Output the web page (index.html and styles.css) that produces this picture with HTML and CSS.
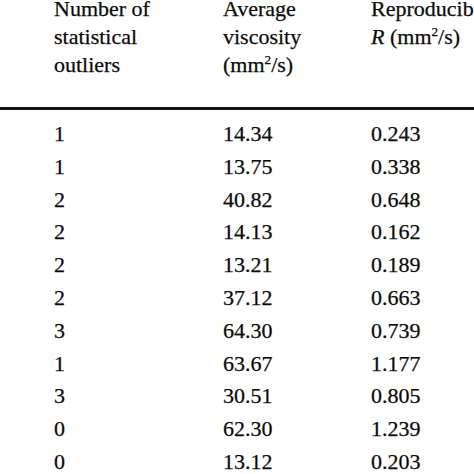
FILE: index.html
```html
<!DOCTYPE html>
<html>
<head>
<meta charset="utf-8">
<link rel="stylesheet" href="styles.css">
</head>
<body>
<div class="table">
  <div class="row head">
    <div class="cell">Number of<br>statistical<br>outliers</div>
    <div class="cell">Average<br>viscosity<br>(mm<sup>2</sup>/s)</div>
    <div class="cell nowrap">Reproducibility<br><i>R</i> (mm<sup>2</sup>/s)</div>
  </div>
  <div class="rule"></div>
  <div class="body">
    <div class="row"><div class="cell">1</div><div class="cell">14.34</div><div class="cell">0.243</div></div>
    <div class="row"><div class="cell">1</div><div class="cell">13.75</div><div class="cell">0.338</div></div>
    <div class="row"><div class="cell">2</div><div class="cell">40.82</div><div class="cell">0.648</div></div>
    <div class="row"><div class="cell">2</div><div class="cell">14.13</div><div class="cell">0.162</div></div>
    <div class="row"><div class="cell">2</div><div class="cell">13.21</div><div class="cell">0.189</div></div>
    <div class="row"><div class="cell">2</div><div class="cell">37.12</div><div class="cell">0.663</div></div>
    <div class="row"><div class="cell">3</div><div class="cell">64.30</div><div class="cell">0.739</div></div>
    <div class="row"><div class="cell">1</div><div class="cell">63.67</div><div class="cell">1.177</div></div>
    <div class="row"><div class="cell">3</div><div class="cell">30.51</div><div class="cell">0.805</div></div>
    <div class="row"><div class="cell">0</div><div class="cell">62.30</div><div class="cell">1.239</div></div>
    <div class="row"><div class="cell">0</div><div class="cell">13.12</div><div class="cell">0.203</div></div>
  </div>
</div>
</body>
</html>
```

FILE: styles.css
```css
html, body {
  margin: 0;
  padding: 0;
  background: #ffffff;
  overflow: hidden;
}
body {
  width: 474px;
  height: 474px;
  font-family: "Liberation Serif", "Times New Roman", serif;
  font-size: 22px;
  color: #0a0a0a;
  -webkit-text-stroke: 0.25px #0a0a0a;
}
.table {
  margin-top: -5px;
}
.row {
  display: grid;
  grid-template-columns: 169px 148px 1fr;
  padding-left: 54px;
}
.head {
  line-height: 28px;
  height: 112px;
}
.nowrap {
  white-space: nowrap;
}
sup {
  font-size: 0.6em;
  line-height: 0;
  vertical-align: 0.6em;
}
.rule {
  height: 3px;
  background: #151515;
}
.body {
  padding-top: 8px;
  line-height: 32.8px;
}
```
